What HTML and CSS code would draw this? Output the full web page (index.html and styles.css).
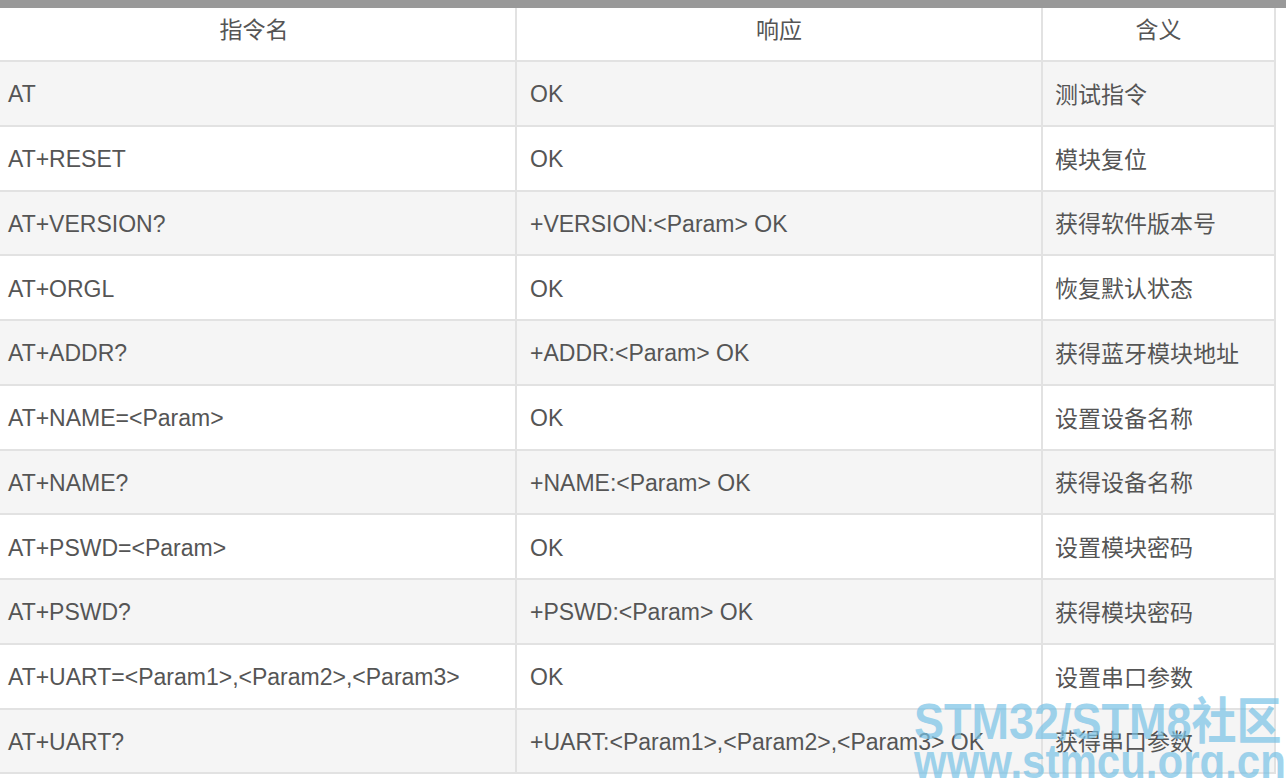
FILE: index.html
```html
<!DOCTYPE html>
<html lang="zh-CN">
<head>
<meta charset="utf-8">
<link rel="stylesheet" href="styles.css">
</head>
<body>
<div class="page">
  <div class="topbar"></div>
  <div class="table">
    <div class="row head">
      <div class="cell c1">指令名</div>
      <div class="cell c2">响应</div>
      <div class="cell c3">含义</div>
    </div>
    <div class="row odd"><div class="cell c1">AT</div><div class="cell c2">OK</div><div class="cell c3">测试指令</div></div>
    <div class="row"><div class="cell c1">AT+RESET</div><div class="cell c2">OK</div><div class="cell c3">模块复位</div></div>
    <div class="row odd"><div class="cell c1">AT+VERSION?</div><div class="cell c2">+VERSION:&lt;Param&gt; OK</div><div class="cell c3">获得软件版本号</div></div>
    <div class="row"><div class="cell c1">AT+ORGL</div><div class="cell c2">OK</div><div class="cell c3">恢复默认状态</div></div>
    <div class="row odd"><div class="cell c1">AT+ADDR?</div><div class="cell c2">+ADDR:&lt;Param&gt; OK</div><div class="cell c3">获得蓝牙模块地址</div></div>
    <div class="row"><div class="cell c1">AT+NAME=&lt;Param&gt;</div><div class="cell c2">OK</div><div class="cell c3">设置设备名称</div></div>
    <div class="row odd"><div class="cell c1">AT+NAME?</div><div class="cell c2">+NAME:&lt;Param&gt; OK</div><div class="cell c3">获得设备名称</div></div>
    <div class="row"><div class="cell c1">AT+PSWD=&lt;Param&gt;</div><div class="cell c2">OK</div><div class="cell c3">设置模块密码</div></div>
    <div class="row odd"><div class="cell c1">AT+PSWD?</div><div class="cell c2">+PSWD:&lt;Param&gt; OK</div><div class="cell c3">获得模块密码</div></div>
    <div class="row"><div class="cell c1">AT+UART=&lt;Param1&gt;,&lt;Param2&gt;,&lt;Param3&gt;</div><div class="cell c2">OK</div><div class="cell c3">设置串口参数</div></div>
    <div class="row odd"><div class="cell c1">AT+UART?</div><div class="cell c2">+UART:&lt;Param1&gt;,&lt;Param2&gt;,&lt;Param3&gt; OK</div><div class="cell c3">获得串口参数</div></div>
  </div>
  <div class="watermark">
    <div class="wm1">STM32/STM8社区</div>
    <div class="wm2">www.stmcu.org.cn</div>
  </div>
</div>
</body>
</html>
```

FILE: styles.css
```css
html, body {
  margin: 0;
  padding: 0;
  background: #ffffff;
}
body {
  width: 1286px;
  height: 778px;
  overflow: hidden;
  font-family: "Liberation Sans", Arial, "Noto Sans CJK SC", sans-serif;
  font-size: 23px;
  color: #555555;
}
.page {
  position: relative;
  width: 1286px;
  height: 778px;
  overflow: hidden;
}
.topbar {
  height: 8px;
  background: #999999;
}
.table {
  margin-left: -7px;
  width: 1283px;
}
.row {
  display: flex;
  height: 64.75px;
  box-sizing: border-box;
  border-bottom: 2px solid #e2e2e2;
}
.row.head {
  height: 54px;
  background: #ffffff;
}
.row.odd {
  background: #f5f5f5;
}
.cell {
  box-sizing: border-box;
  display: flex;
  align-items: center;
  border-right: 2px solid #e2e2e2;
  white-space: nowrap;
}
.c1 { width: 524px; padding-left: 15px; padding-top: 3px; }
.c2 { width: 526px; padding-left: 13px; padding-top: 3px; }
.c3 {
  width: 233px;
  padding-left: 12px;
  padding-bottom: 1px;
  font-family: "Noto Sans CJK SC", sans-serif;
}
.head .cell {
  justify-content: center;
  padding-left: 0;
  padding-top: 0;
  padding-bottom: 12px;
  font-family: "Noto Sans CJK SC", sans-serif;
}
.watermark {
  position: absolute;
  left: 914px;
  top: 696px;
  color: #78c2e6;
  opacity: 0.7;
  font-family: "Liberation Sans", Arial, "Noto Sans CJK SC", sans-serif;
  font-weight: bold;
  pointer-events: none;
  line-height: 1;
}
.wm1 {
  font-size: 45px;
  transform: scaleY(1.12);
  transform-origin: left top;
  white-space: nowrap;
}
.wm2 {
  font-size: 42px;
  margin-top: -3px;
  transform: scaleY(1.15);
  transform-origin: left top;
  white-space: nowrap;
}
```
